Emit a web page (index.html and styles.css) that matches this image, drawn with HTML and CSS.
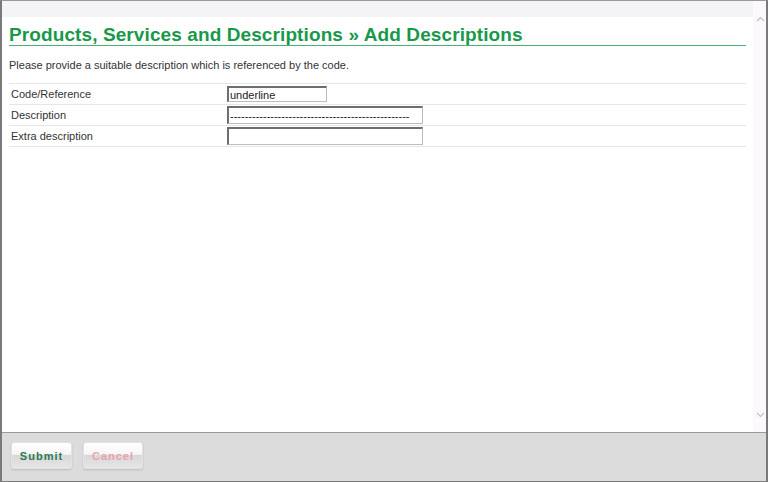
FILE: index.html
```html
<!DOCTYPE html>
<html lang="en">

<head>
    <meta charset="UTF-8">
    <title>Add Descriptions</title>
    <link rel="stylesheet" href="styles.css">
</head>

<body>
    <div id="window">
        <div id="main">
            <div id="content">
                <div class="topband"></div>
                <div class="page">
                    <h1>Products, Services and Descriptions &raquo; Add Descriptions</h1>
                    <p class="intro">Please provide a suitable description which is referenced by the code.</p>

                    <table class="form">
                        <tr>
                            <td class="label">Code/Reference</td>
                            <td><input type="text" class="short" value="underline"></td>
                        </tr>
                        <tr>
                            <td class="label">Description</td>
                            <td><input type="text" class="long" value="-------------------------------------------------"></td>
                        </tr>
                        <tr>
                            <td class="label">Extra description</td>
                            <td><input type="text" class="long" value=""></td>
                        </tr>
                    </table>
                </div>
            </div>
            <div id="scrollbar">
                <svg class="arrow up" width="9" height="6" viewBox="0 0 9 6">
                    <polyline points="1,5 4.5,1.5 8,5" fill="none" stroke="#c2bec4" stroke-width="1.2"/>
                </svg>
                <svg class="arrow down" width="9" height="6" viewBox="0 0 9 6">
                    <polyline points="1,1 4.5,4.5 8,1" fill="none" stroke="#c2bec4" stroke-width="1.2"/>
                </svg>
            </div>
        </div>

        <div id="footer">
            <button class="btn submit">Submit</button>
            <button class="btn cancel">Cancel</button>
        </div>
    </div>
</body>

</html>
```

FILE: styles.css
```css
html, body {
    margin: 0;
    padding: 0;
    background: #ffffff;
    font-family: "Liberation Sans", Arial, sans-serif;
}

#window {
    width: 764px;
    height: 480px;
    border-left: 2px solid #7a7a7a;
    border-right: 2px solid #7a7a7a;
    border-top: 1px solid #9a9a9a;
    border-bottom: 1px solid #7a7a7a;
    display: flex;
    flex-direction: column;
}

#main {
    flex: 1;
    display: flex;
    min-height: 0;
}

#content {
    flex: 1;
    background: #ffffff;
}

.topband {
    height: 16px;
    background: #f4f3f5;
}

.page {
    padding: 0 7px 0 7px;
}

h1 {
    margin: 7px 0 0 0;
    padding-bottom: 0;
    font-size: 19px;
    letter-spacing: 0.1px;
    font-weight: bold;
    color: #18994a;
    border-bottom: 1px solid #4caf78;
    line-height: 21px;
}

.intro {
    margin: 13px 0 12px 0;
    font-size: 11px;
    color: #333333;
}

.form {
    width: 100%;
    border-collapse: collapse;
    border-top: 1px solid #e6e6e6;
}

.form td {
    height: 20px;
    padding: 0 2px;
    border-bottom: 1px solid #e6e6e6;
    font-size: 11px;
    color: #333333;
}

.form td.label {
    width: 212px;
}

input[type="text"] {
    height: 16px;
    padding: 0 1px;
    margin: 0;
    border: 1px solid #bdbdbd;
    border-top: 2px solid #6e6e6e;
    border-left: 2px solid #6e6e6e;
    font-family: "Liberation Sans", Arial, sans-serif;
    font-size: 11px;
    color: #222222;
    box-sizing: border-box;
    display: block;
    outline: none;
}

input.short {
    width: 100px;
    height: 16px;
}

input.long {
    width: 196px;
    height: 18px;
}

#scrollbar {
    width: 13px;
    background: #fcf8fc;
    position: relative;
}

.arrow {
    position: absolute;
    left: 3px;
}

.arrow.up {
    top: 15px;
}

.arrow.down {
    bottom: 14px;
}

#footer {
    height: 49px;
    border-top: 1px solid #9a9a9a;
    background: #dcdcdc;
    display: flex;
    align-items: flex-start;
    gap: 11px;
    padding: 9px 0 0 9px;
    box-sizing: border-box;
}

.btn {
    width: 61px;
    height: 27px;
    padding: 0;
    border: 1px solid #e2e2e2;
    border-radius: 3px;
    background: linear-gradient(#ffffff 0%, #f6f6f6 45%, #d8d8d8 50%, #e6e6e6 100%);
    box-shadow: 0 1px 2px rgba(0, 0, 0, 0.15);
    font-family: "Liberation Sans", Arial, sans-serif;
    font-size: 11px;
    font-weight: bold;
    letter-spacing: 1px;
    cursor: pointer;
}

.submit {
    color: #2b7a52;
}

.cancel {
    width: 60px;
    color: #eaa3ac;
}
```
